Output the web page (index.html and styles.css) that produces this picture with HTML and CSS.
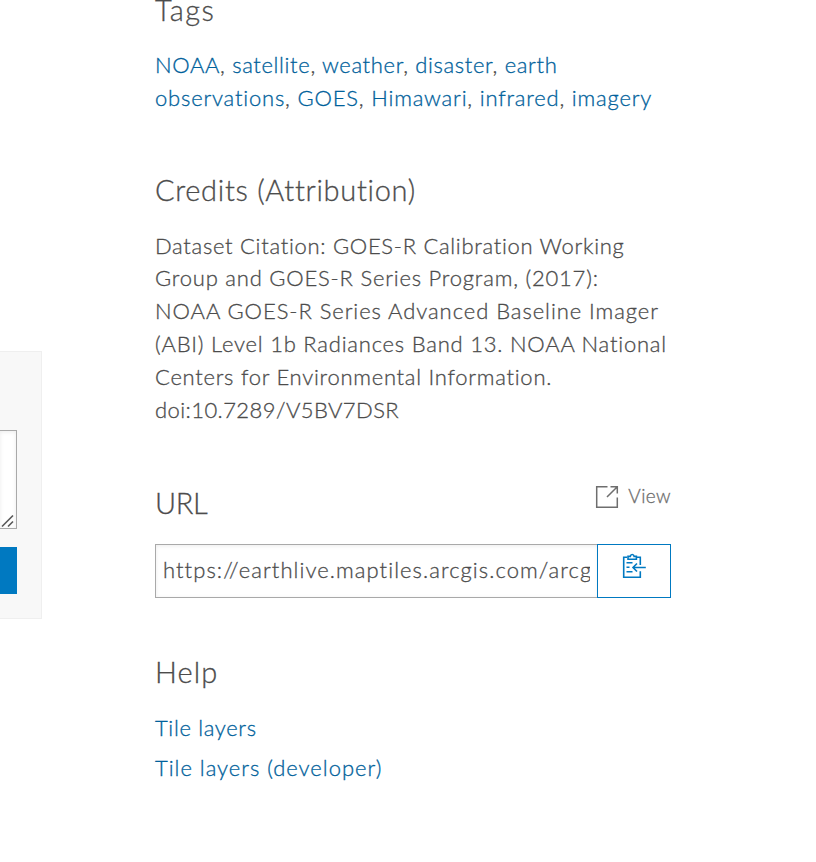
FILE: index.html
```html
<!DOCTYPE html>
<html lang="en">
<head>
  <meta charset="UTF-8">
  <title>Item details</title>
  <link rel="stylesheet" href="styles.css">
</head>
<body>

<div class="page">
  <aside class="comments">
    <div class="comment-field">
      <textarea class="comment-box" aria-label="Comment"></textarea>
      <svg class="grip" width="14" height="14" viewBox="0 0 14 14" fill="none" stroke="#5c5c5c" stroke-width="1.7">
        <path d="M1 12.5L12 1.5M7 12.5l5-5"/>
      </svg>
    </div>
    <button type="button" class="comment-button" aria-label="Comment"></button>
  </aside>

  <main class="details">
    <section class="tags">
      <h2>Tags</h2>
      <p>
        <span class="line tags-1"><a href="#">NOAA</a>, <a href="#">satellite</a>, <a href="#">weather</a>, <a href="#">disaster</a>, <a href="#">earth</a></span>
        <span class="line tags-2"><a href="#">observations</a>, <a href="#">GOES</a>, <a href="#">Himawari</a>, <a href="#">infrared</a>, <a href="#">imagery</a></span>
      </p>
    </section>

    <section class="credits">
      <h2>Credits (Attribution)</h2>
      <p>
        <span class="line credits-1">Dataset Citation: GOES-R Calibration Working</span>
        <span class="line credits-2">Group and GOES-R Series Program, (2017):</span>
        <span class="line credits-3">NOAA GOES-R Series Advanced Baseline Imager</span>
        <span class="line credits-4">(ABI) Level 1b Radiances Band 13. NOAA National</span>
        <span class="line credits-5">Centers for Environmental Information.</span>
        <span class="line credits-6">doi:10.7289/V5BV7DSR</span>
      </p>
    </section>

    <section class="url">
      <div class="url-header">
        <h2>URL</h2>
        <a class="view" href="#">
          <svg width="24" height="24" viewBox="0 0 24 24" fill="none" stroke="currentColor" stroke-width="1.5">
            <path d="M12.5 1.7H1.7v20.6h20.6V12.5M15.5 1.7h6.8v6.8M22.3 1.7L12 12"/>
          </svg>
          <span>View</span>
        </a>
      </div>
      <div class="url-field">
        <input type="text" value="https://earthlive.maptiles.arcgis.com/arcgis/rest/services/GOES/MapServer" aria-label="URL" readonly>
        <button type="button" class="copy" aria-label="Copy">
          <svg width="26" height="26" viewBox="0 0 26 26" fill="none" stroke="currentColor" stroke-width="1.6">
            <path d="M6 4.2H2.7v20.1h16.6v-6M19.3 12V4.2H16M7 6.2V3.4h2.3c.4-2.6 3.4-2.6 3.8 0h2.3v2.8zM5.5 9.7h6M5.5 14.2h3M5.5 18.8h6M24.8 14.5H12M16 10.5l-4 4 4 4"/>
          </svg>
        </button>
      </div>
    </section>

    <section class="help">
      <h2>Help</h2>
      <ul>
        <li><a href="#">Tile layers</a></li>
        <li class="developer"><a href="#">Tile layers (developer)</a></li>
      </ul>
    </section>
  </main>
</div>

</body>
</html>
```
FILE: styles.css
```css
* {
  box-sizing: border-box;
}
body {
  margin: 0;
  background: #fff;
  color: #4c4c4c;
  font-family: Lato, "Liberation Sans", sans-serif;
  font-weight: 300;
  font-size: 22px;
  line-height: 32.8px;
  font-variant-ligatures: none;
  -webkit-text-stroke: 0.3px;
}
.page {
  display: grid;
  grid-template-columns: 42px 516px;
  column-gap: 113px;
  height: 862px;
  overflow: hidden;
}
h2 {
  margin: 0;
  font-size: 29px;
  font-weight: 300;
  line-height: 36px;
}
p {
  margin: 0;
}
a {
  color: #00619b;
  text-decoration: none;
}
.comments {
  margin-top: 351px;
  height: 268px;
  padding: 78px 24px 0 0;
  background: #f8f8f8;
  border: 1px solid #efefef;
  border-left: none;
}
.comment-field {
  position: relative;
  width: 17px;
}
.comment-box {
  display: block;
  width: 17px;
  height: 99px;
  padding: 0;
  border: 1px solid #a9a9a9;
  border-left: none;
  box-shadow: inset 0 1px 4px #ececec;
  resize: none;
}
.grip {
  position: absolute;
  right: 2px;
  bottom: 1px;
}
.comment-button {
  display: block;
  width: 17px;
  height: 47px;
  margin-top: 18px;
  border: none;
  background: #0079c1;
}
.line {
  display: block;
  white-space: nowrap;
}
.tags h2 {
  margin-top: -8px;
  letter-spacing: 1.4px;
}
.tags p {
  margin-top: 21px;
}
.tags-1 {
  letter-spacing: 0.64px;
}
.tags-2 {
  letter-spacing: 0.8px;
}
.credits {
  margin-top: 57px;
}
.credits h2 {
  letter-spacing: 0.7px;
}
.credits p {
  margin-top: 22px;
}
.credits-1 {
  letter-spacing: 0.7px;
}
.credits-2 {
  letter-spacing: 0.79px;
}
.credits-3 {
  letter-spacing: 0.94px;
}
.credits-4 {
  letter-spacing: 0.78px;
}
.credits-5 {
  letter-spacing: 0.73px;
}
.credits-6 {
  letter-spacing: 0.42px;
}
.url {
  margin-top: 59px;
}
.url-header {
  display: flex;
  justify-content: space-between;
}
.url-header h2 {
  letter-spacing: -0.3px;
}
.view {
  display: flex;
  gap: 9px;
  height: 24px;
  color: #6e6e6e;
  font-size: 19px;
  line-height: 22px;
  letter-spacing: 0.4px;
}
.url-field {
  display: flex;
  height: 54px;
  margin-top: 23px;
}
.url-field input {
  width: 443px;
  padding: 0 8px 1px 7px;
  border: 1px solid #a9a9a9;
  border-right: none;
  box-shadow: inset 0 1px 4px #ececec;
  color: inherit;
  font: inherit;
  letter-spacing: 1.06px;
}
.copy {
  width: 74px;
  margin-left: -1px;
  padding: 0 0 8px;
  border: 1px solid #0079c1;
  background: #fff;
  color: #0079c1;
}
.help {
  margin-top: 56px;
}
.help h2 {
  letter-spacing: 1.1px;
}
.help ul {
  margin: 22px 0 0;
  padding: 0;
  list-style: none;
  letter-spacing: 0.65px;
}
.help li {
  margin-bottom: 7px;
}
.help .developer {
  letter-spacing: 0.98px;
}
```
